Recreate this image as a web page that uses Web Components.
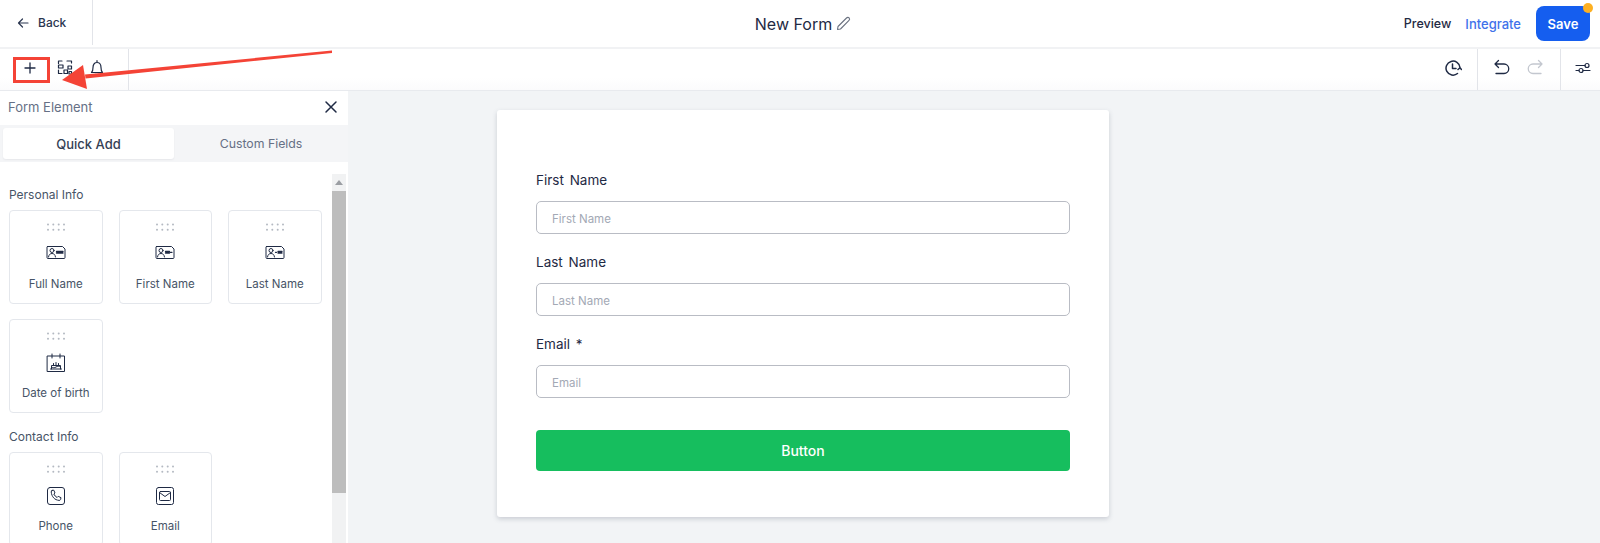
<!DOCTYPE html>
<html lang="en">
<head>
<meta charset="utf-8">
<title>New Form</title>
<style>
  html, body { margin: 0; height: 100%; overflow: hidden; background: #f2f4f6; }
  body { font-family: Inter, "Liberation Sans", sans-serif; color: #1f2a44; }
</style>
</head>
<body>
<form-builder></form-builder>

<script>
const icons = {
  fullName: `<path d="M1.500 2.500h15l2.500 2.500v8.500a1 1 0 0 1-1 1H2a1 1 0 0 1-1-1V3a.5.5 0 0 1 .5-.5z"/><circle cx="6" cy="6.500" r="2"/><path d="M2.500 13c.3-2.400 1.700-3.500 3.500-3.500s3.200 1.100 3.500 3.500"/><path d="M10.500 7.500h6.500M10.500 9h6.500" stroke-width="1.300"/>`,
  firstName: `<path d="M1.500 2.500h15l2.500 2.500v8.500a1 1 0 0 1-1 1H2a1 1 0 0 1-1-1V3a.5.5 0 0 1 .5-.5z"/><circle cx="6" cy="6.500" r="2"/><path d="M2.500 13c.3-2.400 1.700-3.500 3.500-3.500s3.200 1.100 3.500 3.500"/><path d="M10.500 7.500h4M10.500 9h4M15.500 8.300h1.500" stroke-width="1.300"/>`,
  lastName: `<path d="M1.500 2.500h15l2.500 2.500v8.500a1 1 0 0 1-1 1H2a1 1 0 0 1-1-1V3a.5.5 0 0 1 .5-.5z"/><circle cx="6" cy="6.500" r="2"/><path d="M2.500 13c.3-2.400 1.700-3.500 3.500-3.500s3.200 1.100 3.500 3.500"/><path d="M10.500 8.300h1M13 7.500h4M13 9h4" stroke-width="1.300"/>`,
  birth: `<rect x="1.500" y="3" width="17" height="15.500"/><path d="M6 1v4M14 1v4"/><path d="M4.500 16h11M5.500 16v-3.500h9V16M5.500 14c1.500 1 3 1 4.500 0s3-1 4.500 0M10 12.500V9.500M7.500 12.500v-2M12.500 12.500v-2"/>`,
  phone: `<rect x="1.500" y="1.500" width="17" height="17" rx="2.500"/><path d="M6 4.500l1.800-.3 1.200 2.800-1.200 1c.7 1.500 1.800 2.700 3.300 3.500l1.100-1.200 2.800 1.400-.4 1.800c-.2.600-.8 1-1.500.9C8.500 14 5.800 10.800 5.200 6c0-.7.300-1.300.8-1.500z"/>`,
  email: `<rect x="1.500" y="1.500" width="17" height="17" rx="2"/><rect x="4.500" y="5.500" width="11" height="9" rx="1"/><path d="M4.500 6.500L10 10.500l5.500-4"/>`
}

const topBarTpl = document.createElement('template')
topBarTpl.innerHTML = `
<style>
  :host { display: grid; grid-template-columns: 1fr auto 1fr; align-items: stretch; height: 47px; background: #fff; border-bottom: 2px solid #f1f2f4; }
  .left { display: flex; }
  .back { width: 93px; box-sizing: border-box; height: 45px; padding-left: 17px; display: flex; align-items: center; gap: 9px; border-right: 1px solid #e2e4e9; font-size: 12px; font-weight: 500; color: #2b3650; }
  .title { display: flex; align-items: center; gap: 4px; font-size: 16px; color: #1f2a44; padding-left: 6px; }
  .actions { display: flex; align-items: center; justify-content: flex-end; font-size: 13px; font-weight: 500; padding-right: 10px; }
  .preview { color: #1f2a44; font-size: 12.500px; margin-right: 14px; }
  .integrate { color: #3f72ea; margin-right: 15px; }
  .save { position: relative; width: 54px; height: 35px; background: #155eef; color: #fff; border-radius: 8px; display: flex; align-items: center; justify-content: center; font-weight: 600; }
  .save::after { content: ''; position: absolute; right: -3px; top: -3px; width: 10px; height: 10px; background: #fdb022; border-radius: 50%; }
  svg { fill: none; stroke-linecap: round; stroke-linejoin: round; }
</style>
<div class="left">
  <div class="back">
    <svg width="12" height="12" viewBox="0 0 12 12" stroke="#2b3650" stroke-width="1.200"><path d="M11 6H1.500M5.500 2L1.500 6l4 4"/></svg>
    <span>Back</span>
  </div>
</div>
<div class="title">
  <span>New Form</span>
  <svg width="15" height="15" viewBox="0 0 15 15" stroke="#6b7280" stroke-width="1.100"><path d="M2 10.500L10.500 2c.8-.8 2-.8 2.600-.1s.6 1.800-.1 2.500L4.500 13 1.500 13.500z"/></svg>
</div>
<div class="actions">
  <span class="preview">Preview</span>
  <span class="integrate">Integrate</span>
  <span class="save">Save</span>
</div>
`
customElements.define('top-bar', class extends HTMLElement {
  constructor () {
    super()
    this.attachShadow({ mode: 'open' }).appendChild(topBarTpl.content.cloneNode(true))
  }
})

const toolBarTpl = document.createElement('template')
toolBarTpl.innerHTML = `
<style>
  :host { display: flex; align-items: stretch; height: 41px; background: linear-gradient(#fff, #fff 70%, #fbfbfc); border-bottom: 1px solid #e8eaee; }
  .left { width: 129px; box-sizing: border-box; border-right: 1px solid #e2e4e9; display: flex; align-items: center; padding: 0 0 4px 22px; }
  .space { flex: 1; }
  .right { display: flex; align-items: stretch; }
  .hist { width: 40px; display: flex; align-items: center; padding: 0 0 4px 7px; box-sizing: border-box; }
  .undo { width: 84px; border-left: 1px solid #e2e4e9; border-right: 1px solid #e2e4e9; display: flex; align-items: center; justify-content: center; gap: 17px; box-sizing: border-box; padding: 0 2px 5px 0; }
  .opts { width: 39px; display: flex; align-items: center; justify-content: center; padding: 0 0 3px 5px; box-sizing: border-box; }
  svg { display: block; fill: none; stroke: #1f2a44; stroke-linecap: round; stroke-linejoin: round; }
</style>
<div class="left">
  <svg width="16" height="16" viewBox="0 0 16 16" stroke-width="1.300"><path d="M8 3v10M3 8h10"/></svg>
  <svg width="16" height="15" viewBox="0 0 16 15" stroke-width="1.200" style="margin-left:19px"><path d="M1.500 3.500V1h3.500M10 1h4.500v2M1.500 10v3.500h3.500M1.500 7.500V5h4.500v3H1.500zM7 10h3.500v3.500H7zM11 6h3.500v3H11zM12 11.500h2.500v2.500H12z"/></svg>
  <svg width="16" height="18" viewBox="0 0 16 18" stroke-width="1.200" style="margin-left:16px"><path d="M2.500 13.500h11c-1.200-1-1.500-2.500-1.500-5 0-3-1.600-5-4-5s-4 2-4 5c0 2.500-.3 4-1.500 5zM6.500 15.500c.7.800 2.300.8 3 0M8 1.500v2"/></svg>
</div>
<div class="space"></div>
<div class="right">
  <div class="hist"><svg width="18" height="18" viewBox="0 0 18 18" stroke-width="1.500"><path d="M16 8.500A7 7 0 1 0 13.500 14.500M8.500 5v4.500H12M14 10.500l2-1.800 1.500 1.800"/></svg></div>
  <div class="undo">
    <svg width="17" height="17" viewBox="0 0 17 17" stroke-width="1.300"><path d="M5.500 1.500L2 5l3.500 3.500M2 5h9a4 4 0 0 1 0 9.500H3"/></svg>
    <svg width="17" height="17" viewBox="0 0 17 17" stroke-width="1.300" style="stroke:#c3c7cf"><path d="M11.500 1.500L15 5l-3.500 3.500M15 5H6a4 4 0 0 0 0 9.500h8"/></svg>
  </div>
  <div class="opts"><svg width="16" height="16" viewBox="0 0 16 16" stroke-width="1.200"><path d="M1 5.500h9M1 10.500h3"/><circle cx="12" cy="5.500" r="2"/><circle cx="6" cy="10.500" r="2"/><path d="M8 10.500h7"/></svg></div>
</div>
`
customElements.define('tool-bar', class extends HTMLElement {
  constructor () {
    super()
    this.attachShadow({ mode: 'open' }).appendChild(toolBarTpl.content.cloneNode(true))
  }
})

const elementCardTpl = document.createElement('template')
elementCardTpl.innerHTML = `
<style>
  :host { display: flex; flex-direction: column; align-items: center; box-sizing: border-box; height: 94px; background: #fff; border: 1px solid #e4e7ec; border-radius: 4px; font-size: 11.500px; color: #475467; }
  .dots { display: block; margin-top: 12px; fill: #b4b9c2; }
  .icon { margin-top: 13px; width: 20px; height: 20px; fill: none; stroke: #1f2a44; stroke-width: 1; stroke-linejoin: round; stroke-linecap: round; }
  .name { margin-top: 13px; line-height: 15px; }
</style>
<svg class="dots" width="18" height="8" viewBox="0 0 18 8">
  <circle cx="1" cy="1.500" r="1"/><circle cx="6.300" cy="1.500" r="1"/><circle cx="11.700" cy="1.500" r="1"/><circle cx="17" cy="1.500" r="1"/>
  <circle cx="1" cy="6.800" r="1"/><circle cx="6.300" cy="6.800" r="1"/><circle cx="11.700" cy="6.800" r="1"/><circle cx="17" cy="6.800" r="1"/>
</svg>
<svg class="icon" viewBox="0 0 20 20"></svg>
<div class="name"><slot></slot></div>
`
customElements.define('element-card', class extends HTMLElement {
  constructor () {
    super()
    this.attachShadow({ mode: 'open' }).appendChild(elementCardTpl.content.cloneNode(true))
  }

  connectedCallback () {
    this.shadowRoot.querySelector('.icon').innerHTML = icons[this.getAttribute('icon')]
  }
})

const sidePanelTpl = document.createElement('template')
sidePanelTpl.innerHTML = `
<style>
  :host { display: flex; flex-direction: column; width: 348px; flex: none; background: #fff; overflow: hidden; }
  .head { height: 34px; flex: none; display: flex; align-items: center; justify-content: space-between; padding: 0 10px 2px 8px; box-sizing: border-box; font-size: 13px; color: #667085; }
  .head svg { display: block; fill: none; stroke: #1f2a44; stroke-width: 1.500; stroke-linecap: round; }
  .tabs { height: 37px; flex: none; display: flex; background: #f4f5f7; box-sizing: border-box; padding: 3px 0; }
  .tab { display: flex; align-items: center; justify-content: center; }
  .on { width: 171px; margin-left: 3px; background: #fff; border-radius: 3px; color: #344054; font-size: 13px; font-weight: 500; box-shadow: 0 1px 2px rgba(16, 24, 40, .06); }
  .off { flex: 1; color: #667085; font-size: 12.300px; }
  .body { flex: 1; display: flex; min-height: 0; padding-right: 2px; }
  .list { flex: 1; padding: 0 0 0 9px; overflow: hidden; }
  .group { font-size: 12px; color: #475467; line-height: 15px; margin: 16px 0 8px; }
  .group.first { margin-top: 25px; }
  .grid { display: grid; grid-template-columns: repeat(3, 93.500px); gap: 15px 16px; }
  .scroll { width: 14px; margin-top: 12px; background: #f1f2f3; display: flex; flex-direction: column; }
  .up { height: 17px; display: flex; justify-content: center; align-items: center; }
  .up i { border: 4px solid transparent; border-top: 0; border-bottom: 5px solid #9b9ea3; }
  .thumb { height: 302px; background: #bdbdbd; }
</style>
<div class="head">
  <span>Form Element</span>
  <svg width="14" height="14" viewBox="0 0 14 14"><path d="M2 2l10 10M12 2L2 12"/></svg>
</div>
<div class="tabs">
  <div class="tab on">Quick Add</div>
  <div class="tab off">Custom Fields</div>
</div>
<div class="body">
  <div class="list">
    <div class="group first">Personal Info</div>
    <div class="grid">
      <element-card icon="fullName">Full Name</element-card>
      <element-card icon="firstName">First Name</element-card>
      <element-card icon="lastName">Last Name</element-card>
      <element-card icon="birth">Date of birth</element-card>
    </div>
    <div class="group">Contact Info</div>
    <div class="grid">
      <element-card icon="phone">Phone</element-card>
      <element-card icon="email">Email</element-card>
    </div>
  </div>
  <div class="scroll"><div class="up"><i></i></div><div class="thumb"></div></div>
</div>
`
customElements.define('side-panel', class extends HTMLElement {
  constructor () {
    super()
    this.attachShadow({ mode: 'open' }).appendChild(sidePanelTpl.content.cloneNode(true))
  }
})

const formFieldTpl = document.createElement('template')
formFieldTpl.innerHTML = `
<style>
  :host { display: block; margin-bottom: 18px; }
  label { display: block; font-size: 13.500px; line-height: 20px; color: #1f2a44; margin-bottom: 11px; word-spacing: 2px; }
  input { display: block; width: 100%; box-sizing: border-box; height: 33px; padding: 2px 15px 0; border: 1px solid #b9bcc4; border-radius: 5px; background: #fff; font: 11.500px Inter, "Liberation Sans", sans-serif; outline: none; }
  input::placeholder { color: #a3a9b5; opacity: 1; }
</style>
<label></label>
<input type="text">
`
customElements.define('form-field', class extends HTMLElement {
  constructor () {
    super()
    this.attachShadow({ mode: 'open' }).appendChild(formFieldTpl.content.cloneNode(true))
  }

  connectedCallback () {
    this.shadowRoot.querySelector('label').textContent = this.getAttribute('label')
    this.shadowRoot.querySelector('input').placeholder = this.getAttribute('placeholder')
  }
})

const formCardTpl = document.createElement('template')
formCardTpl.innerHTML = `
<style>
  :host { display: block; width: 612px; height: 407px; box-sizing: border-box; padding: 60px 39px 0 39px; background: #fff; border-radius: 3px; box-shadow: 0 2px 5px rgba(60, 70, 90, .22); }
  .submit { margin-top: 32px; height: 41px; background: #16be5e; border-radius: 4px; color: #fff; font-size: 14px; font-weight: 500; display: flex; align-items: center; justify-content: center; }
</style>
<form-field label="First Name" placeholder="First Name"></form-field>
<form-field label="Last Name" placeholder="Last Name"></form-field>
<form-field label="Email *" placeholder="Email"></form-field>
<div class="submit">Button</div>
`
customElements.define('form-card', class extends HTMLElement {
  constructor () {
    super()
    this.attachShadow({ mode: 'open' }).appendChild(formCardTpl.content.cloneNode(true))
  }
})

const builderTpl = document.createElement('template')
builderTpl.innerHTML = `
<style>
  :host { display: block; position: relative; width: 1600px; height: 543px; overflow: hidden; }
  main { display: flex; height: 452px; }
  .canvas { flex: 1; padding: 19px 0 0 149px; }
  .mark { position: absolute; left: 13px; top: 57px; width: 37px; height: 26px; box-sizing: border-box; border: 3px solid #f44336; }
  .arrow { position: absolute; left: 0; top: 0; pointer-events: none; }
</style>
<top-bar></top-bar>
<tool-bar></tool-bar>
<main>
  <side-panel></side-panel>
  <div class="canvas"><form-card></form-card></div>
</main>
<div class="mark"></div>
<svg class="arrow" width="340" height="95" viewBox="0 0 340 95">
  <path d="M332 50.500L85 74.500l.5 4L332 53z" fill="#f44336"/>
  <path d="M62 80L83 65l4 24z" fill="#f44336"/>
</svg>
`
customElements.define('form-builder', class extends HTMLElement {
  constructor () {
    super()
    this.attachShadow({ mode: 'open' }).appendChild(builderTpl.content.cloneNode(true))
  }
})
</script>
</body>
</html>
